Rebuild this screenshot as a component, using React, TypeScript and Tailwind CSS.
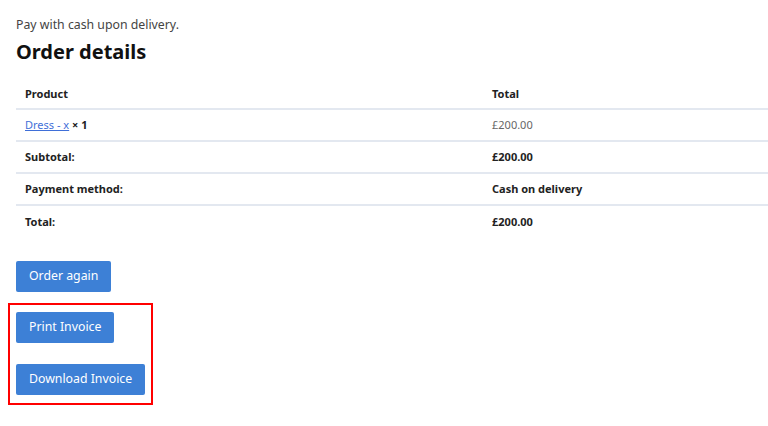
export default function App() {
  const rows = [
    { label: 'Subtotal:', value: '£200.00' },
    { label: 'Payment method:', value: 'Cash on delivery' },
    { label: 'Total:', value: '£200.00' },
  ]

  return (
    <div className="min-h-[426px] bg-white pl-4 pt-[15px] text-[#222] [font-family:'Noto_Sans','Open_Sans',sans-serif]">
      <p className="text-[12.3px] leading-5 text-[#444]">Pay with cash upon delivery.</p>
      <h2 className="mt-[3px] text-[20px] font-bold leading-7 text-[#111]">Order details</h2>

      {/* Order table */}
      <div className="mt-[14px] text-[11px]">
        <div className="flex h-[30px] items-center border-b-2 border-[#e3e8f0] font-bold">
          <div className="w-[476px] pl-[9px]">Product</div>
          <div className="flex-1">Total</div>
        </div>
        <div className="flex h-[32px] items-center border-b-2 border-[#e3e8f0]">
          <div className="w-[476px] pl-[9px]">
            <a href="#" className="text-[#3f6fd8] underline">Dress - x</a>
            <span className="font-bold"> × 1</span>
          </div>
          <div className="flex-1 text-[#666]">£200.00</div>
        </div>
        {rows.map((r, i) => (
          <div
            key={r.label}
            className={`flex h-[32px] items-center font-bold ${i < rows.length - 1 ? 'border-b-2 border-[#e3e8f0]' : ''}`}
          >
            <div className="w-[476px] pl-[9px]">{r.label}</div>
            <div className="flex-1">{r.value}</div>
          </div>
        ))}
      </div>

      {/* Actions */}
      <div className="mt-[23px] flex flex-col items-start">
        <button className="h-[31px] rounded-[2px] bg-[#3d80d6] px-[13px] text-[12.3px] text-white">Order again</button>
        <div className="-ml-2 mt-[11px] flex flex-col items-start gap-[21px] border-2 border-[#ff0000] px-[6px] pb-[8px] pt-[7px]">
          <button className="h-[31px] rounded-[2px] bg-[#3d80d6] px-[13px] text-[12.3px] text-white">Print Invoice</button>
          <button className="h-[31px] rounded-[2px] bg-[#3d80d6] px-[13px] text-[12.3px] text-white">Download Invoice</button>
        </div>
      </div>
    </div>
  )
}
